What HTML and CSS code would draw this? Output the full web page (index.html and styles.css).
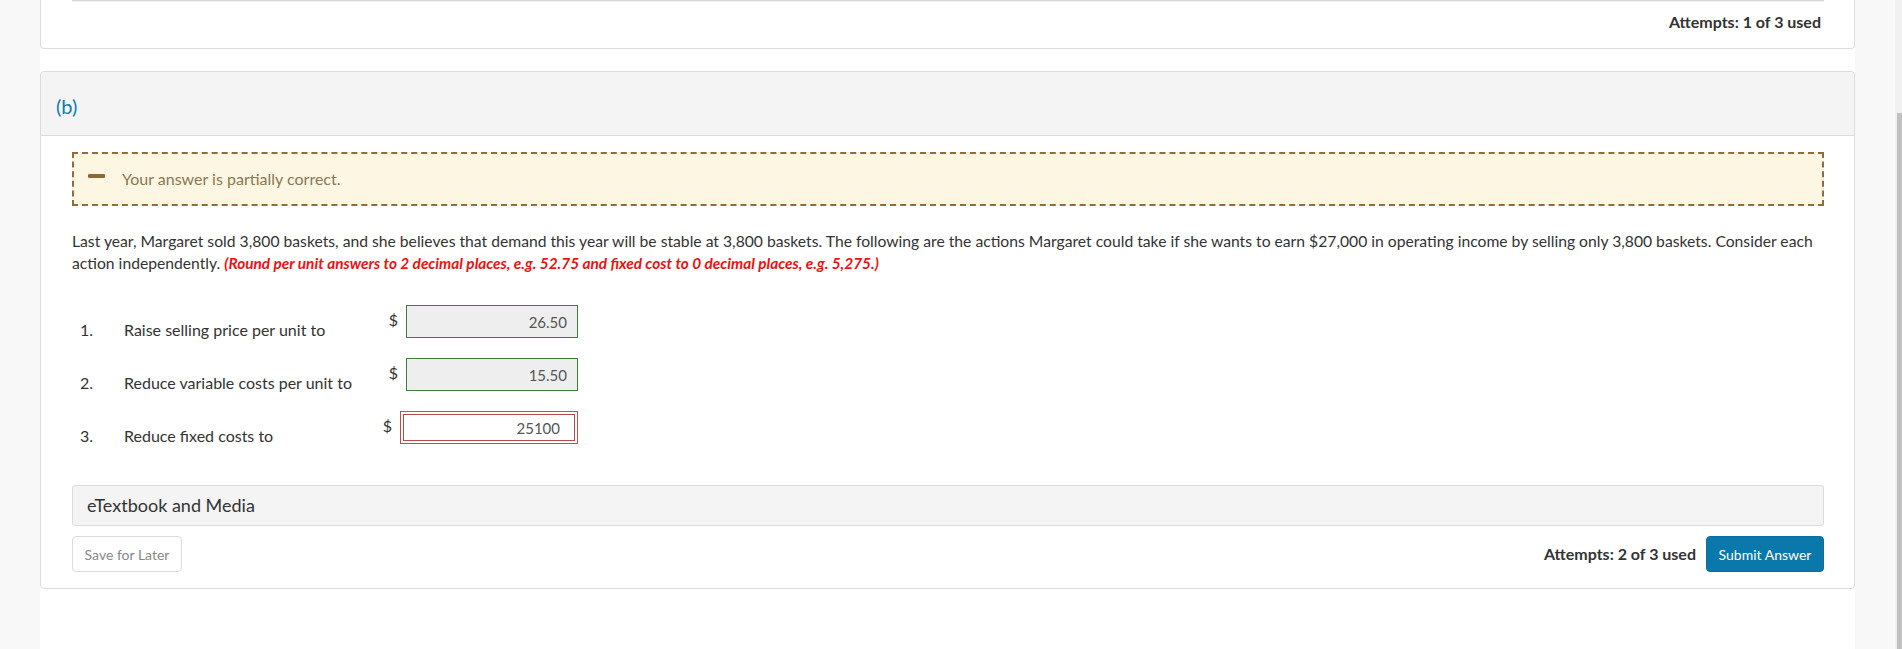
FILE: index.html
```html
<!DOCTYPE html>
<html>
	<head>
		<meta charset="UTF-8">
		<title>Question</title>
		<link rel="stylesheet" href="styles.css">
	</head>
	<body>
		<div class="page">
			<div class="main">
				<div class="card card-prev">
					<div class="prev-box"></div>
					<div class="attempts attempts-top">Attempts: 1 of 3 used</div>
				</div>
				<div class="card part">
					<div class="part-head">(b)</div>
					<div class="part-body">
						<div class="notice">
							<span class="notice-icon"></span>
							<span class="notice-text">Your answer is partially correct.</span>
						</div>
						<p class="question">Last year, Margaret sold 3,800 baskets, and she believes that demand this year will be stable at 3,800 baskets. The following are the actions Margaret could take if she wants to earn $27,000 in operating income by selling only 3,800 baskets. Consider each action independently. <em class="hint">(Round per unit answers to 2 decimal places, e.g. 52.75 and fixed cost to 0 decimal places, e.g. 5,275.)</em></p>
						<ol class="answers">
							<li class="answer">
								<span class="num">1.</span>
								<span class="label">Raise selling price per unit to</span>
								<span class="money">
									<span class="dollar">$</span>
									<input class="field correct" value="26.50" readonly>
								</span>
							</li>
							<li class="answer">
								<span class="num">2.</span>
								<span class="label">Reduce variable costs per unit to</span>
								<span class="money">
									<span class="dollar">$</span>
									<input class="field correct" value="15.50" readonly>
								</span>
							</li>
							<li class="answer">
								<span class="num">3.</span>
								<span class="label">Reduce fixed costs to</span>
								<span class="money">
									<span class="dollar">$</span>
									<span class="wrong-ring"><input class="field wrong" value="25100" readonly></span>
								</span>
							</li>
						</ol>
						<div class="media">eTextbook and Media</div>
						<div class="actions">
							<button class="btn btn-save">Save for Later</button>
							<div class="actions-right">
								<span class="attempts">Attempts: 2 of 3 used</span>
								<button class="btn btn-submit">Submit Answer</button>
							</div>
						</div>
					</div>
				</div>
			</div>
			<div class="gutter"></div>
			<div class="scrollbar"><div class="thumb"></div></div>
		</div>
	</body>
</html>
```

FILE: styles.css
```css
body{
	margin: 0;
	padding: 0;
	background: #f8f8f8;
	font-family: Lato, "Liberation Sans", sans-serif;
	color: #333;
}
.page{
	display: flex;
	height: 649px;
	overflow: hidden;
	padding-left: 40px;
}
.main{
	width: 1815px;
	flex: none;
	background: #fff;
}
.gutter{
	flex: 1;
}
.scrollbar{
	width: 7px;
	background: #f1f1f1;
	display: flex;
	flex-direction: column;
	align-items: flex-end;
}
.thumb{
	margin-top: 113px;
	width: 5px;
	flex: 1;
	background: #c1c1c1;
}

/* cards */
.card{
	border: 1px solid #dcdcdc;
	border-radius: 4px;
	background: #fff;
}
.card-prev{
	border-top: none;
	border-radius: 0 0 4px 4px;
	height: 48px;
	padding: 0 30px 0 31px;
}
.prev-box{
	height: 0;
	border-bottom: 1px solid #d6d6d6;
	box-shadow: 0 1px 1px rgba(0,0,0,.06);
}
.attempts{
	font-weight: bold;
	font-size: 16px;
	line-height: 22px;
	color: #333;
}
.attempts-top{
	margin-top: 10px;
	padding-right: 3px;
	text-align: right;
}
.part{
	margin-top: 22px;
}
.part-head{
	height: 64px;
	box-sizing: border-box;
	padding: 21px 15px 0;
	background: #f4f4f4;
	border-bottom: 1px solid #dcdcdc;
	border-radius: 4px 4px 0 0;
	color: #0b7cb6;
	font-size: 20px;
	line-height: 26px;
}
.part-body{
	padding: 16px 30px 16px 31px;
}

/* feedback */
.notice{
	display: flex;
	align-items: center;
	height: 50px;
	padding: 0 14px;
	border: 2px dashed #8d6e3c;
	background: #fdf6e3;
}
.notice-icon{
	width: 17px;
	height: 4px;
	border-radius: 1px;
	background: #8b6a35;
	margin-right: 17px;
	margin-top: -6px;
}
.notice-text{
	font-size: 16px;
	line-height: 22px;
	color: #8c7753;
}

.question{
	margin: 24px 0 0;
	font-size: 15.7px;
	line-height: 22px;
	color: #333;
}
.hint{
	font-weight: bold;
	font-size: 0.98em;
	color: #ee1111;
}

/* answers */
.answers{
	list-style: none;
	margin: 31px 0 0;
	padding: 0 0 0 8px;
}
.answer{
	display: flex;
	height: 53px;
	font-size: 16px;
	line-height: 22px;
}
.num{
	width: 44px;
	padding-top: 14px;
}
.label{
	width: 246px;
	padding-top: 14px;
}
.money{
	width: 208px;
	display: flex;
	justify-content: flex-end;
	align-items: flex-start;
}
.dollar{
	padding-top: 4px;
	margin-right: 8px;
	font-size: 16px;
	color: #333;
}
.field{
	width: 172px;
	height: 33px;
	box-sizing: border-box;
	padding: 0 10px;
	text-align: right;
	font-family: Lato, "Liberation Sans", sans-serif;
	font-size: 15px;
	color: #555;
	outline: none;
}
.correct{
	border: 1px solid #3f7d3f;
	background: #eeeeee;
}
.wrong-ring{
	display: block;
	padding: 2px;
	border: 1px solid #c0504d;
	background: #fff;
}
.wrong{
	display: block;
	height: 27px;
	border: 1px solid #b94a48;
	background: #fff;
	padding-right: 14px;
}

/* media + actions */
.media{
	margin-top: 21px;
	height: 39px;
	padding-left: 14px;
	border: 1px solid #dcdcdc;
	border-radius: 3px;
	background: #f4f4f4;
	font-size: 18px;
	line-height: 39px;
	color: #333;
}
.actions{
	margin-top: 10px;
	display: flex;
	justify-content: space-between;
	align-items: center;
}
.actions-right{
	display: flex;
	align-items: center;
}
.btn{
	height: 36px;
	border-radius: 4px;
	font-family: Lato, "Liberation Sans", sans-serif;
	font-size: 14px;
	cursor: pointer;
}
.btn-save{
	width: 110px;
	border: 1px solid #dcdcdc;
	background: #fff;
	color: #888;
}
.btn-submit{
	width: 118px;
	margin-left: 10px;
	border: 1px solid #0a6f9e;
	background: #0b78ab;
	color: #fff;
}
```
